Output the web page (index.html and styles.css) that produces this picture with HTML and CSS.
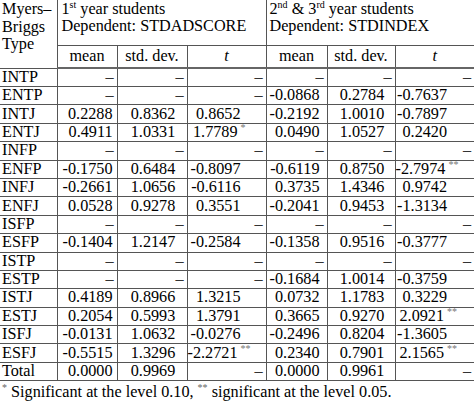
FILE: index.html
```html
<!DOCTYPE html>
<html>
<head>
<meta charset="utf-8">
<link rel="stylesheet" href="styles.css">
</head>
<body>
<table class="tbl">
  <colgroup>
    <col class="c-type"><col class="c-mean1"><col class="c-sd1"><col class="c-t1">
    <col class="c-mean2"><col class="c-sd2"><col class="c-t2">
  </colgroup>
  <thead>
    <tr class="h1">
      <th rowspan="2" class="type-h">Myers–<br>Briggs<br>Type</th>
      <th colspan="3" class="grp">1<sup>st</sup> year students<br>Dependent: STDADSCORE</th>
      <th colspan="3" class="grp grp2">2<sup>nd</sup> &amp; 3<sup>rd</sup> year students<br>Dependent: STDINDEX</th>
    </tr>
    <tr class="h2">
      <th>mean</th><th>std. dev.</th><th class="g1end"><i>t</i></th>
      <th>mean</th><th>std. dev.</th><th><i>t</i></th>
    </tr>
  </thead>
  <tbody>
    <tr><td class="ty">INTP</td><td class="na">–</td><td class="na">–</td><td class="na g1end">–</td><td class="na">–</td><td class="na">–</td><td class="na">–</td></tr>
    <tr><td class="ty">ENTP</td><td class="na">–</td><td class="na">–</td><td class="na g1end">–</td><td class="m m2">-0.0868</td><td class="sd">0.2784</td><td class="t t2">-0.7637</td></tr>
    <tr><td class="ty">INTJ</td><td class="m">0.2288</td><td class="sd">0.8362</td><td class="t g1end">0.8652</td><td class="m m2">-0.2192</td><td class="sd">1.0010</td><td class="t t2">-0.7897</td></tr>
    <tr><td class="ty">ENTJ</td><td class="m">0.4911</td><td class="sd">1.0331</td><td class="t g1end">1.7789<span class="star">*</span></td><td class="m m2">0.0490</td><td class="sd">1.0527</td><td class="t t2">0.2420</td></tr>
    <tr><td class="ty">INFP</td><td class="na">–</td><td class="na">–</td><td class="na g1end">–</td><td class="na">–</td><td class="na">–</td><td class="na">–</td></tr>
    <tr><td class="ty">ENFP</td><td class="m">-0.1750</td><td class="sd">0.6484</td><td class="t g1end">-0.8097</td><td class="m m2">-0.6119</td><td class="sd">0.8750</td><td class="t t2">-2.7974<span class="star">**</span></td></tr>
    <tr><td class="ty">INFJ</td><td class="m">-0.2661</td><td class="sd">1.0656</td><td class="t g1end">-0.6116</td><td class="m m2">0.3735</td><td class="sd">1.4346</td><td class="t t2">0.9742</td></tr>
    <tr><td class="ty">ENFJ</td><td class="m">0.0528</td><td class="sd">0.9278</td><td class="t g1end">0.3551</td><td class="m m2">-0.2041</td><td class="sd">0.9453</td><td class="t t2">-1.3134</td></tr>
    <tr><td class="ty">ISFP</td><td class="na">–</td><td class="na">–</td><td class="na g1end">–</td><td class="na">–</td><td class="na">–</td><td class="na">–</td></tr>
    <tr><td class="ty">ESFP</td><td class="m">-0.1404</td><td class="sd">1.2147</td><td class="t g1end">-0.2584</td><td class="m m2">-0.1358</td><td class="sd">0.9516</td><td class="t t2">-0.3777</td></tr>
    <tr><td class="ty">ISTP</td><td class="na">–</td><td class="na">–</td><td class="na g1end">–</td><td class="na">–</td><td class="na">–</td><td class="na">–</td></tr>
    <tr><td class="ty">ESTP</td><td class="na">–</td><td class="na">–</td><td class="na g1end">–</td><td class="m m2">-0.1684</td><td class="sd">1.0014</td><td class="t t2">-0.3759</td></tr>
    <tr><td class="ty">ISTJ</td><td class="m">0.4189</td><td class="sd">0.8966</td><td class="t g1end">1.3215</td><td class="m m2">0.0732</td><td class="sd">1.1783</td><td class="t t2">0.3229</td></tr>
    <tr><td class="ty">ESTJ</td><td class="m">0.2054</td><td class="sd">0.5993</td><td class="t g1end">1.3791</td><td class="m m2">0.3665</td><td class="sd">0.9270</td><td class="t t2">2.0921<span class="star">**</span></td></tr>
    <tr><td class="ty">ISFJ</td><td class="m">-0.0131</td><td class="sd">1.0632</td><td class="t g1end">-0.0276</td><td class="m m2">-0.2496</td><td class="sd">0.8204</td><td class="t t2">-1.3605</td></tr>
    <tr><td class="ty">ESFJ</td><td class="m">-0.5515</td><td class="sd">1.3296</td><td class="t g1end">-2.2721<span class="star">**</span></td><td class="m m2">0.2340</td><td class="sd">0.7901</td><td class="t t2">2.1565<span class="star">**</span></td></tr>
    <tr><td class="ty">Total</td><td class="m">0.0000</td><td class="sd">0.9969</td><td class="na g1end">–</td><td class="m m2">0.0000</td><td class="sd">0.9961</td><td class="na">–</td></tr>
  </tbody>
</table>
<p class="note"><span class="fstar">*</span> Significant at the level 0.10, <span class="fstar">**</span> significant at the level 0.05.</p>
</body>
</html>
```

FILE: styles.css
```css
html, body {
  margin: 0;
  padding: 0;
  background: #fff;
}
body {
  font-family: "Liberation Serif", "Times New Roman", serif;
  font-size: 16.2px;
  color: #000;
  width: 474px;
  overflow: hidden;
}
.tbl {
  border-collapse: collapse;
  table-layout: fixed;
  width: 474px;
}
.c-type { width: 57px; }
.c-mean1 { width: 60px; }
.c-sd1 { width: 70px; }
.c-t1 { width: 79px; }
.c-mean2 { width: 61px; }
.c-sd2 { width: 68px; }
.c-t2 { width: 79px; }

th, td {
  padding: 0;
  font-weight: normal;
  white-space: nowrap;
  line-height: 17px;
  border: 1px solid #555;
}
th:first-child, td:first-child { border-left: none; }
tr > :last-child { border-right: none; }
thead .h1 th { border-top: none; }

.h1 { height: 45px; }
.h1 th {
  vertical-align: top;
  text-align: left;
  padding-top: 1px;
}
.type-h {
  line-height: 17.5px;
  padding-left: 2px;
}
.grp { padding-left: 4px; }
.grp2 { padding-left: 3px; }
sup {
  font-size: 10px;
  line-height: 0;
  vertical-align: 6px;
}
.h2 { height: 23px; }
.h2 th {
  text-align: center;
  vertical-align: middle;
  border-bottom: 2px solid #666;
}
.g1end { border-right: 1px solid #555; }

tbody tr { height: 18.4px; }
td { vertical-align: middle; }
.ty { text-align: left; padding-left: 2px; }
.na { text-align: right; padding-right: 3px; color: #333; }
.m { text-align: right; padding-right: 4px; }
.m2 { padding-right: 7px; }
.sd { text-align: center; padding-left: 2px; }
.t { text-align: right; padding-right: 25px; }
.t2 { padding-right: 27px; }
.star {
  display: inline-block;
  width: 0;
  white-space: nowrap;
  font-size: 10px;
  line-height: 0;
  vertical-align: 6px;
  padding-left: 3px;
  color: #777;
}
.note {
  margin: 0;
  padding: 2px 0 0 2px;
  line-height: 19px;
  white-space: nowrap;
}
.fstar {
  font-size: 10px;
  vertical-align: 6px;
  line-height: 0;
  color: #666;
}
```
